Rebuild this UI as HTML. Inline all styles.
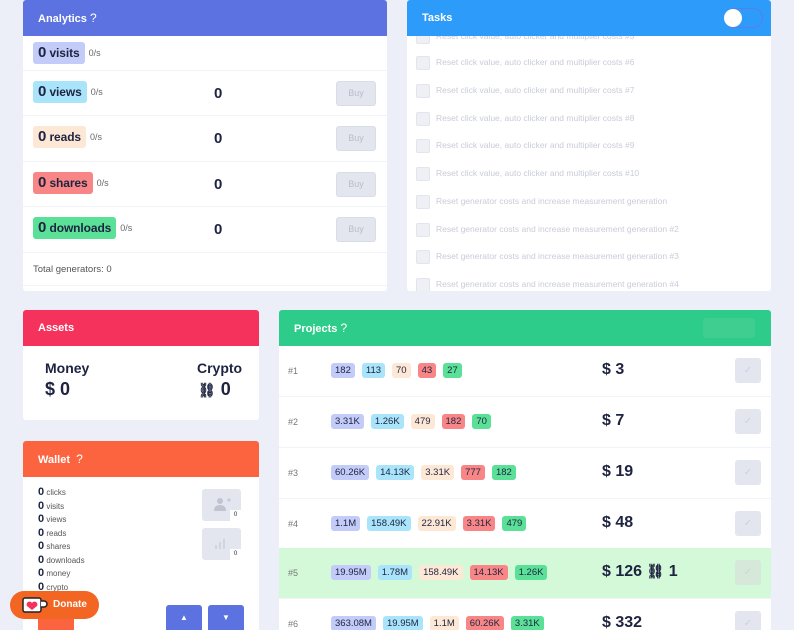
<!DOCTYPE html>
<html><head><meta charset="utf-8"><style>
*{box-sizing:border-box;margin:0;padding:0}
body{width:794px;height:630px;background:#eceff7;font-family:"Liberation Sans",sans-serif;position:relative;overflow:hidden;color:#1d2340}
.card{position:absolute;background:#fff;border-radius:3px;overflow:hidden}
.hd{height:36px;color:#fff;font-size:11px;font-weight:bold;padding-left:15px;line-height:36px}
.ab{position:absolute}
.row{position:absolute;left:0;right:0;border-bottom:1px solid #f1f3f7}
.bl{position:absolute;left:10px;display:flex;align-items:center;gap:4px}
.badge{border-radius:3px;font-size:12px;font-weight:bold;padding:0 5px;height:22px;line-height:22px;color:#1d2340;letter-spacing:-0.1px}
.badge b{font-size:15px}
.rate{font-size:9px;color:#666}
.num{position:absolute;font-weight:bold;font-size:15px}
.buy{position:absolute;right:11px;width:40px;height:25px;background:#e3e6ee;border:1px solid #d9dde6;border-radius:3px;color:#b8bdc9;font-size:9px;text-align:center;line-height:23px}
.task{position:absolute;left:9px;font-size:8.5px;color:#c9ccd8;height:14px;line-height:14px;padding-left:20px;white-space:nowrap}
.task:before{content:"";position:absolute;left:0;top:1px;width:12px;height:12px;background:#eef0f5;border:1px solid #e2e5ec;border-radius:2px}
.pr{position:absolute;left:0;right:0;height:51px;border-bottom:1px solid #f1f3f7}
.pn{position:absolute;left:9px;top:20px;font-size:9px;color:#777}
.tags{position:absolute;left:52px;top:17px;display:flex;gap:7px}
.t{height:15px;line-height:15px;border-radius:3px;padding:0 4px;font-size:9.5px;color:#1d2340}
.c1{background:#c3cbf8}.c2{background:#a9e4fb}.c3{background:#fde8d6}.c4{background:#f88686}.c5{background:#5be098}
.pm{position:absolute;left:323px;top:15px;font-size:16px;font-weight:bold}
.ck{position:absolute;left:456px;top:12px;width:26px;height:25px;background:#e3e6ee;border-radius:3px;color:#cdd1dc;font-size:10px;text-align:center;line-height:25px}
.w{font-size:8px;color:#555;height:13.5px;line-height:13.5px}
.w b{font-size:11px;color:#1d2340}
.ch{font-size:14px}
</style></head><body>

<div class="card" style="left:23px;top:0;width:364px;height:291px">
<div class="hd" style="background:#5c72e0">Analytics <span style="font-weight:normal;font-size:12px">?</span></div>
<div class="row" style="top:36px;height:35px"><div class="bl" style="top:6px"><div class="badge c1"><b>0</b> visits</div><div class="rate">0/s</div></div></div>
<div class="row" style="top:71px;height:45px"><div class="bl" style="top:10px"><div class="badge c2"><b>0</b> views</div><div class="rate">0/s</div></div><div class="num" style="left:191px;top:14px">0</div><div class="buy" style="top:10px">Buy</div></div>
<div class="row" style="top:116px;height:46px"><div class="bl" style="top:10px"><div class="badge c3"><b>0</b> reads</div><div class="rate">0/s</div></div><div class="num" style="left:191px;top:14px">0</div><div class="buy" style="top:10px">Buy</div></div>
<div class="row" style="top:162px;height:45px"><div class="bl" style="top:10px"><div class="badge c4"><b>0</b> shares</div><div class="rate">0/s</div></div><div class="num" style="left:191px;top:14px">0</div><div class="buy" style="top:10px">Buy</div></div>
<div class="row" style="top:207px;height:46px"><div class="bl" style="top:10px"><div class="badge c5"><b>0</b> downloads</div><div class="rate">0/s</div></div><div class="num" style="left:191px;top:14px">0</div><div class="buy" style="top:10px">Buy</div></div>
<div class="row" style="top:253px;height:33px"><div class="ab" style="left:10px;top:11px;font-size:9.5px;color:#555">Total generators: 0</div></div>
</div>

<div class="card" style="left:407px;top:0;width:364px;height:291px">
<div class="task" style="top:29px">Reset click value, auto clicker and multiplier costs #5</div>
<div class="task" style="top:55px">Reset click value, auto clicker and multiplier costs #6</div>
<div class="task" style="top:83px">Reset click value, auto clicker and multiplier costs #7</div>
<div class="task" style="top:111px">Reset click value, auto clicker and multiplier costs #8</div>
<div class="task" style="top:138px">Reset click value, auto clicker and multiplier costs #9</div>
<div class="task" style="top:166px">Reset click value, auto clicker and multiplier costs #10</div>
<div class="task" style="top:194px">Reset generator costs and increase measurement generation</div>
<div class="task" style="top:222px">Reset generator costs and increase measurement generation #2</div>
<div class="task" style="top:249px">Reset generator costs and increase measurement generation #3</div>
<div class="task" style="top:277px">Reset generator costs and increase measurement generation #4</div>
<div class="hd ab" style="background:#2d9bf9;left:0;top:0;width:364px">Tasks</div>
<div class="ab" style="left:317px;top:8px;width:39px;height:20px;border-radius:10px;border:1px solid #5b7ee6;background:#2d9bf9"></div>
<div class="ab" style="left:317px;top:9px;width:18px;height:18px;border-radius:9px;background:#fff"></div>
</div>

<div class="card" style="left:23px;top:310px;width:236px;height:110px">
<div class="hd" style="background:#f5325b">Assets</div>
<div class="ab" style="left:22px;top:50px;font-size:14px;font-weight:bold">Money</div>
<div class="ab" style="left:22px;top:69px;font-size:18px;font-weight:bold">$ 0</div>
<div class="ab" style="left:174px;top:50px;font-size:14px;font-weight:bold">Crypto</div>
<div class="ab" style="left:175px;top:69px;font-size:18px;font-weight:bold"><span class="ch">⛓</span> 0</div>
</div>

<div class="card" style="left:23px;top:441px;width:236px;height:189px;border-radius:3px 3px 0 0">
<div class="hd" style="background:#fc6440">Wallet &nbsp;<span style="font-weight:normal;font-size:12px">?</span></div>
<div class="ab" style="left:15px;top:45px">
<div class="w"><b>0</b> clicks</div><div class="w"><b>0</b> visits</div><div class="w"><b>0</b> views</div><div class="w"><b>0</b> reads</div><div class="w"><b>0</b> shares</div><div class="w"><b>0</b> downloads</div><div class="w"><b>0</b> money</div><div class="w"><b>0</b> crypto</div></div>
<div class="ab" style="left:179px;top:48px;width:39px;height:32px;background:#e3e6ee;border-radius:3px"><svg width="39" height="32"><circle cx="18" cy="12" r="3" fill="#bfc4d0"/><path d="M12 22q0-6 6-6t6 6z" fill="#bfc4d0"/><path d="M25 11h4M27 9v4" stroke="#bfc4d0"/></svg><div class="ab" style="right:0;bottom:0;width:11px;height:11px;background:#fff;font-size:6px;text-align:center;line-height:11px">0</div></div>
<div class="ab" style="left:179px;top:87px;width:39px;height:32px;background:#e3e6ee;border-radius:3px"><svg width="39" height="32"><path d="M14 21v-4M18 21v-7M22 21v-10" stroke="#c6cad5" stroke-width="1.3"/></svg><div class="ab" style="right:0;bottom:0;width:11px;height:11px;background:#fff;font-size:6px;text-align:center;line-height:11px">0</div></div>
<div class="ab" style="left:15px;top:165px;width:36px;height:30px;background:#fc6440"></div>
<div class="ab" style="left:143px;top:164px;width:36px;height:30px;background:#5c72e0;border-radius:3px;color:#fff;font-size:8px;text-align:center;line-height:26px">▲</div>
<div class="ab" style="left:185px;top:164px;width:36px;height:30px;background:#5c72e0;border-radius:3px;color:#fff;font-size:8px;text-align:center;line-height:26px">▼</div>
</div>

<div class="card" style="left:279px;top:310px;width:492px;height:320px;border-radius:3px 3px 0 0">
<div class="hd" style="background:#2ecc8a">Projects <span style="font-weight:normal;font-size:12px">?</span></div>
<div class="ab" style="left:424px;top:8px;width:52px;height:20px;background:#3fce90;border-radius:3px"></div>
<div class="pr" style="top:36px"><div class="pn">#1</div><div class="tags"><span class="t c1">182</span><span class="t c2">113</span><span class="t c3">70</span><span class="t c4">43</span><span class="t c5">27</span></div><div class="pm">$ 3</div><div class="ck">✓</div></div>
<div class="pr" style="top:87px"><div class="pn">#2</div><div class="tags"><span class="t c1">3.31K</span><span class="t c2">1.26K</span><span class="t c3">479</span><span class="t c4">182</span><span class="t c5">70</span></div><div class="pm">$ 7</div><div class="ck">✓</div></div>
<div class="pr" style="top:138px"><div class="pn">#3</div><div class="tags"><span class="t c1">60.26K</span><span class="t c2">14.13K</span><span class="t c3">3.31K</span><span class="t c4">777</span><span class="t c5">182</span></div><div class="pm">$ 19</div><div class="ck">✓</div></div>
<div class="pr" style="top:189px"><div class="pn">#4</div><div class="tags"><span class="t c1">1.1M</span><span class="t c2">158.49K</span><span class="t c3">22.91K</span><span class="t c4">3.31K</span><span class="t c5">479</span></div><div class="pm">$ 48</div><div class="ck">✓</div></div>
<div class="pr" style="top:238px;background:#d4f9d9"><div class="pn">#5</div><div class="tags"><span class="t c1">19.95M</span><span class="t c2">1.78M</span><span class="t c3">158.49K</span><span class="t c4">14.13K</span><span class="t c5">1.26K</span></div><div class="pm">$ 126 <span class="ch">⛓</span> 1</div><div class="ck" style="background:#d6e8da">✓</div></div>
<div class="pr" style="top:289px"><div class="pn">#6</div><div class="tags"><span class="t c1">363.08M</span><span class="t c2">19.95M</span><span class="t c3">1.1M</span><span class="t c4">60.26K</span><span class="t c5">3.31K</span></div><div class="pm">$ 332</div><div class="ck">✓</div></div>
</div>

<div class="ab" style="left:10px;top:591px;width:89px;height:28px;border-radius:14px;background:#f26522;color:#fff;font-size:10px;font-weight:bold;line-height:28px;padding-left:43px">Donate</div>
<svg class="ab" style="left:22px;top:596px" width="26" height="18"><rect x="1" y="2" width="18" height="14" rx="2" fill="#fff" stroke="#222" stroke-width="1.5"/><path d="M19 5h3a3 3 0 0 1 0 6h-3" fill="#fff" stroke="#222" stroke-width="1.5"/><path d="M10 14l-5-4a2.5 2.5 0 0 1 5-3a2.5 2.5 0 0 1 5 3z" fill="#f5325b"/></svg>
</body></html>
